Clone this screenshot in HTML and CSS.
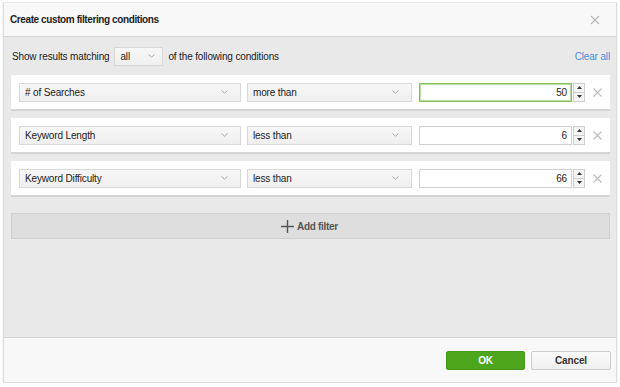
FILE: index.html
```html
<!DOCTYPE html>
<html>
<head>
<meta charset="utf-8">
<link rel="stylesheet" href="styles.css">
</head>
<body>
<div class="dialog">
  <div class="header">
    <span class="title">Create custom filtering conditions</span>
    <svg class="close" width="10" height="10" viewBox="0 0 10 10"><path d="M1 1L9 9M9 1L1 9" stroke="#b8b8b8" stroke-width="1.2" fill="none"/></svg>
  </div>
  <div class="body">
    <div class="match">
      <span>Show results matching</span>
      <div class="sel sel-all"><span>all</span><svg class="chev" width="7" height="4" viewBox="0 0 7 4"><path d="M0.5 0.5L3.5 3.2L6.5 0.5" stroke="#aaa" fill="none"/></svg></div>
      <span>of the following conditions</span>
      <span class="clear">Clear all</span>
    </div>

    <div class="card">
      <div class="sel sel-field"><span># of Searches</span><svg class="chev" width="7" height="4" viewBox="0 0 7 4"><path d="M0.5 0.5L3.5 3.2L6.5 0.5" stroke="#aaa" fill="none"/></svg></div>
      <div class="sel sel-op"><span>more than</span><svg class="chev" width="7" height="4" viewBox="0 0 7 4"><path d="M0.5 0.5L3.5 3.2L6.5 0.5" stroke="#aaa" fill="none"/></svg></div>
      <div class="num focused">50</div>
      <div class="spin"><div class="sp"><svg width="5" height="3" viewBox="0 0 5 3"><path d="M0 3L2.5 0L5 3Z" fill="#333"/></svg></div><div class="sp"><svg width="5" height="3" viewBox="0 0 5 3"><path d="M0 0L2.5 3L5 0Z" fill="#333"/></svg></div></div>
      <svg class="rm" width="9" height="9" viewBox="0 0 9 9"><path d="M0.5 0.5L8.5 8.5M8.5 0.5L0.5 8.5" stroke="#bbb" stroke-width="1.1" fill="none"/></svg>
    </div>

    <div class="card">
      <div class="sel sel-field"><span>Keyword Length</span><svg class="chev" width="7" height="4" viewBox="0 0 7 4"><path d="M0.5 0.5L3.5 3.2L6.5 0.5" stroke="#aaa" fill="none"/></svg></div>
      <div class="sel sel-op"><span>less than</span><svg class="chev" width="7" height="4" viewBox="0 0 7 4"><path d="M0.5 0.5L3.5 3.2L6.5 0.5" stroke="#aaa" fill="none"/></svg></div>
      <div class="num">6</div>
      <div class="spin"><div class="sp"><svg width="5" height="3" viewBox="0 0 5 3"><path d="M0 3L2.5 0L5 3Z" fill="#333"/></svg></div><div class="sp"><svg width="5" height="3" viewBox="0 0 5 3"><path d="M0 0L2.5 3L5 0Z" fill="#333"/></svg></div></div>
      <svg class="rm" width="9" height="9" viewBox="0 0 9 9"><path d="M0.5 0.5L8.5 8.5M8.5 0.5L0.5 8.5" stroke="#bbb" stroke-width="1.1" fill="none"/></svg>
    </div>

    <div class="card">
      <div class="sel sel-field"><span>Keyword Difficulty</span><svg class="chev" width="7" height="4" viewBox="0 0 7 4"><path d="M0.5 0.5L3.5 3.2L6.5 0.5" stroke="#aaa" fill="none"/></svg></div>
      <div class="sel sel-op"><span>less than</span><svg class="chev" width="7" height="4" viewBox="0 0 7 4"><path d="M0.5 0.5L3.5 3.2L6.5 0.5" stroke="#aaa" fill="none"/></svg></div>
      <div class="num">66</div>
      <div class="spin"><div class="sp"><svg width="5" height="3" viewBox="0 0 5 3"><path d="M0 3L2.5 0L5 3Z" fill="#333"/></svg></div><div class="sp"><svg width="5" height="3" viewBox="0 0 5 3"><path d="M0 0L2.5 3L5 0Z" fill="#333"/></svg></div></div>
      <svg class="rm" width="9" height="9" viewBox="0 0 9 9"><path d="M0.5 0.5L8.5 8.5M8.5 0.5L0.5 8.5" stroke="#bbb" stroke-width="1.1" fill="none"/></svg>
    </div>

    <div class="add">
      <svg width="13" height="13" viewBox="0 0 13 13"><path d="M6.5 0V13M0 6.5H13" stroke="#555" stroke-width="1.4" fill="none"/></svg>
      <span>Add filter</span>
    </div>
  </div>
  <div class="footer">
    <div class="btn ok">OK</div>
    <div class="btn cancel">Cancel</div>
  </div>
</div>
</body>
</html>
```

FILE: styles.css
```css
html, body {
  margin: 0;
  padding: 0;
  background: #ffffff;
  font-family: "Liberation Sans", Arial, sans-serif;
  font-size: 10px;
  letter-spacing: -0.15px;
  color: #222;
}
.dialog {
  margin: 2px 3px 0 3px;
  width: 612px;
  border: 1px solid #dcdcdc;
  border-top-color: #e6e6e6;
  box-shadow: 0 1px 1px #c8c8c8;
  background: #f8f8f8;
}
.header {
  height: 33px;
  border-bottom: 1px solid #d4d4d4;
  display: flex;
  align-items: center;
  justify-content: space-between;
  padding: 0 16px 0 6px;
  background: #f8f8f8;
}
.title {
  font-weight: bold;
  font-size: 10px;
  letter-spacing: -0.4px;
  color: #222;
}
.body {
  background: #e9e9e9;
  height: 301px;
  padding: 0 6px 0 7px;
  box-sizing: border-box;
  border-bottom: 1px solid #d6d6d6;
}
.match {
  display: flex;
  align-items: center;
  height: 38px;
  padding: 0 0 0 1px;
  box-sizing: border-box;
}
.match .clear {
  margin-left: auto;
  color: #4a8fd8;
}
.sel {
  height: 19px;
  box-sizing: border-box;
  border: 1px solid #d8d8d8;
  background: linear-gradient(#f7f7f7, #efefef);
  display: flex;
  align-items: center;
  justify-content: space-between;
  padding: 0 12px 0 5px;
  color: #222;
}
.sel-all {
  width: 49px;
  margin: 0 5px 0 5px;
  padding-right: 7px;
}
.card {
  background: #ffffff;
  border-bottom: 2px solid #d4d4d4;
  height: 34px;
  box-sizing: content-box;
  display: flex;
  align-items: center;
  padding: 0 0 0 8px;
  margin-bottom: 7px;
  width: 591px;
}
.sel-field { width: 222px; }
.sel-op { width: 165px; margin-left: 6px; }
.num {
  margin-left: 7px;
  width: 153px;
  height: 19px;
  box-sizing: border-box;
  border: 1px solid #d0d0d0;
  text-align: right;
  padding-right: 4px;
  line-height: 17px;
  color: #222;
}
.num.focused {
  border: 1px solid #86c05a;
  box-shadow: inset 0 0 0 1px #b9dca0;
}
.spin {
  width: 12px;
  height: 19px;
  margin-left: 1px;
  display: flex;
  flex-direction: column;
}
.sp {
  flex: 1;
  border: 1px solid #cfcfcf;
  background: #f4f4f4;
  display: flex;
  align-items: center;
  justify-content: center;
}
.sp + .sp { border-top: none; }
.rm { margin-left: 8px; }
.add {
  margin-top: 16px;
  height: 26px;
  width: 599px;
  box-sizing: border-box;
  border: 1px solid #cfcfcf;
  background: #dedede;
  display: flex;
  align-items: center;
  justify-content: center;
  gap: 3px;
  font-weight: bold;
  letter-spacing: -0.3px;
  color: #555;
  padding-right: 2px;
}
.footer {
  height: 44px;
  background: #f8f8f8;
  display: flex;
  align-items: center;
  justify-content: flex-end;
  padding-right: 5px;
  gap: 6px;
}
.btn {
  width: 79px;
  height: 19px;
  box-sizing: border-box;
  display: flex;
  align-items: center;
  justify-content: center;
  font-size: 10px;
  font-weight: bold;
  border-radius: 2px;
}
.ok {
  background: #4ea61e;
  color: #fff;
  border: 1px solid #47991b;
}
.cancel {
  background: linear-gradient(#fbfbfb, #efefef);
  border: 1px solid #cccccc;
  color: #333;
  width: 80px;
}
```
